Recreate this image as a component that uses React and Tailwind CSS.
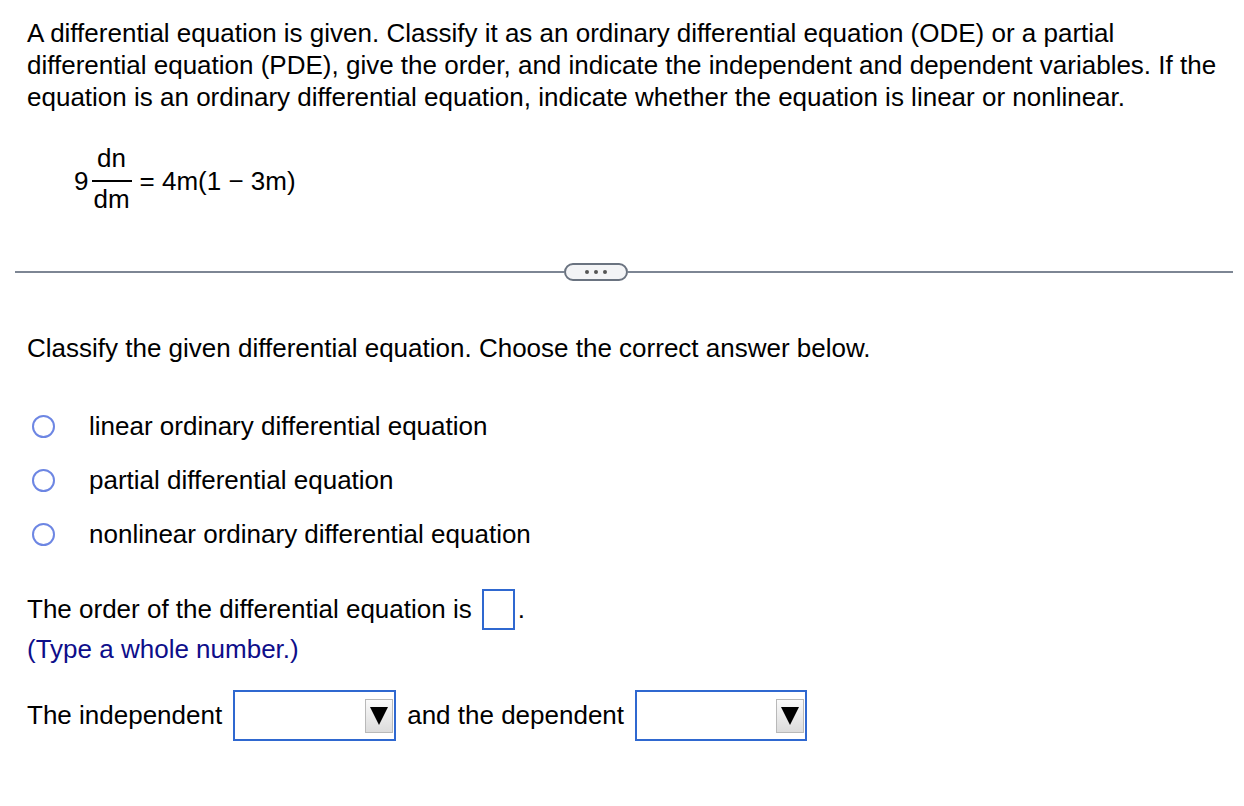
const font = { fontFamily: '"Liberation Sans", Arial, sans-serif' };

const Select = ({ width }) => (
  <span
    className={`inline-flex items-center justify-end border-2 border-[#2f68d0] bg-white h-[51px] pr-[1px] align-middle ${width}`}
  >
    <span className="flex items-center justify-center w-[28px] h-[34px] border border-[#b9b9b9] bg-gradient-to-b from-[#fafafa] to-[#dcdcdc]">
      <svg width="18" height="18" viewBox="0 0 18 18">
        <polygon points="0,0 18,0 9,18" fill="#000" />
      </svg>
    </span>
  </span>
);

const options = [
  "linear ordinary differential equation",
  "partial differential equation",
  "nonlinear ordinary differential equation",
];

export default function App() {
  return (
    <div className="w-[1244px] h-[806px] bg-white text-black text-[26px] whitespace-nowrap" style={font}>
      <div className="pl-[27px] pt-[17px] leading-[32px]">
        <p>
          A differential equation is given. Classify it as an ordinary differential equation (ODE) or a partial
          <br />
          differential equation (PDE), give the order, and indicate the independent and dependent variables. If the
          <br />
          equation is an ordinary differential equation, indicate whether the equation is linear or nonlinear.
        </p>

        {/* equation */}
        <div className="flex items-center ml-[47px] mt-[31px] h-[74px]">
          <span>9</span>
          <span className="inline-flex flex-col items-center mx-[2px] leading-[28px]">
            <span className="px-[3px] pb-[8px]">dn</span>
            <span className="w-[40px] h-[2px] bg-black"></span>
            <span className="px-[3px] pt-[3px] pb-[5px]">dm</span>
          </span>
          <span className="ml-[5px]">= 4m(1 − 3m)</span>
        </div>
      </div>

      {/* divider */}
      <div className="flex items-center ml-[15px] mr-[11px] mt-[45px] h-[18px]">
        <div className="w-[549px] h-[2px] bg-[#7d8694]"></div>
        <div className="flex items-center justify-center gap-[5px] w-[64px] h-[18px] rounded-full border-2 border-[#6a7380] bg-[#f3f4f6]">
          <span className="w-[4px] h-[4px] rounded-full bg-[#555]"></span>
          <span className="w-[4px] h-[4px] rounded-full bg-[#555]"></span>
          <span className="w-[4px] h-[4px] rounded-full bg-[#555]"></span>
        </div>
        <div className="flex-1 h-[2px] bg-[#7d8694]"></div>
      </div>

      <div className="pl-[27px]">
        <p className="mt-[51px] leading-[32px]">Classify the given differential equation. Choose the correct answer below.</p>

        <div className="mt-[46px] flex flex-col gap-[22px]">
          {options.map((o) => (
            <label key={o} className="flex items-center h-[32px] leading-[32px]">
              <span className="w-[23px] h-[23px] rounded-full border-2 border-[#6d86e3] ml-[5px] mr-[34px]"></span>
              <span>{o}</span>
            </label>
          ))}
        </div>

        <div className="mt-[39px] flex items-center h-[40px]">
          <span>The order of the differential equation is</span>
          <span className="inline-block w-[33px] h-[41px] border-2 border-[#2f68d0] ml-[10px]"></span>
          <span className="ml-[3px]">.</span>
        </div>
        <p className="mt-[4px] leading-[32px] text-[#0e0e8a]">(Type a whole number.)</p>

        <div className="mt-[25px] flex items-center gap-[11px]">
          <span>The independent</span>
          <Select width="w-[163px]" />
          <span>and the dependent</span>
          <Select width="w-[172px]" />
        </div>
      </div>
    </div>
  );
}
